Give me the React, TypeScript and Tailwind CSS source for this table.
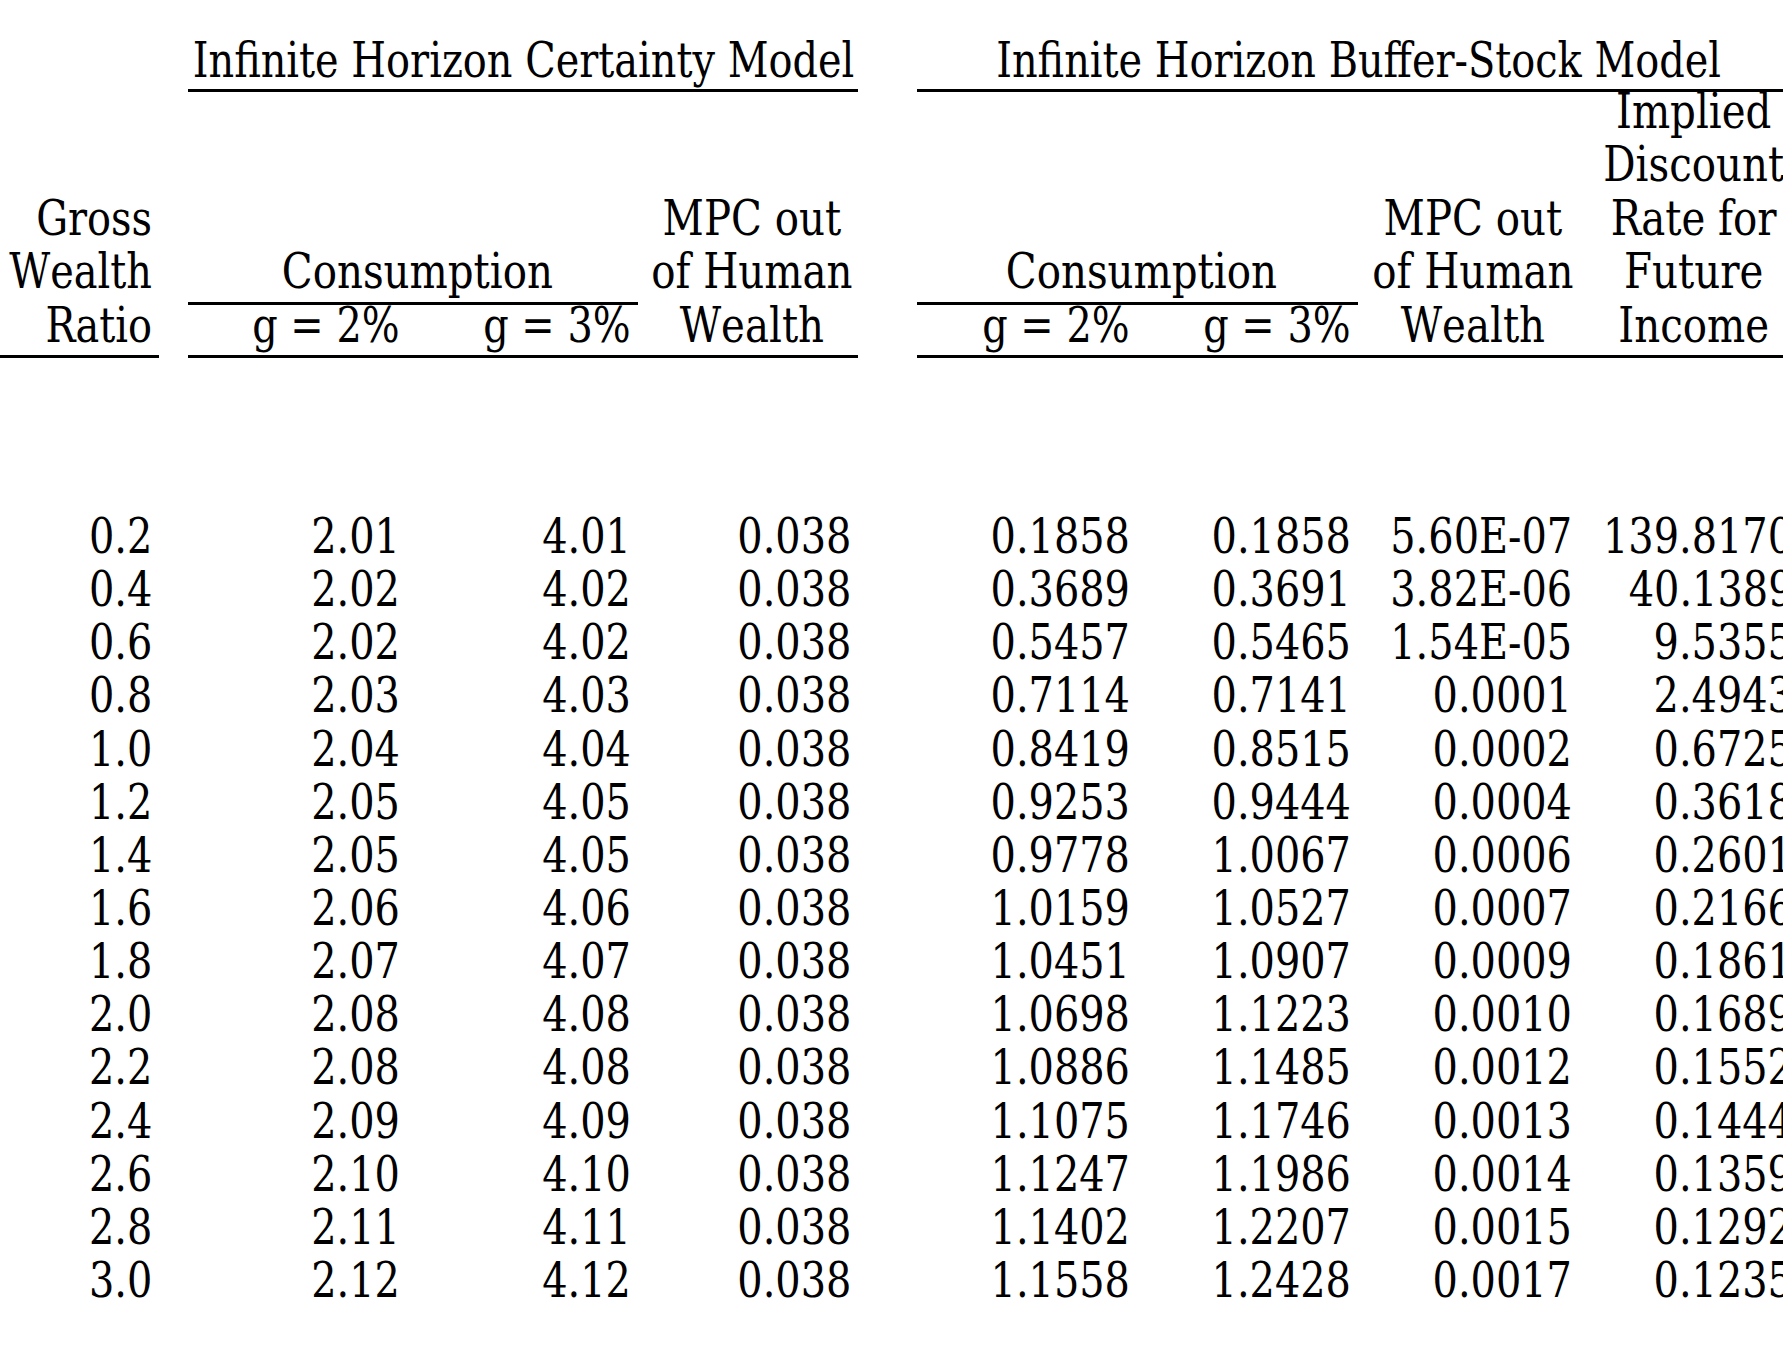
const GRID =
  "grid grid-cols-[159px_29px_219px_231px_220px_59px_220px_221px_221px_221px]";

const rows = [
  ["0.2", "2.01", "4.01", "0.038", "0.1858", "0.1858", "5.60E-07", "139.8170"],
  ["0.4", "2.02", "4.02", "0.038", "0.3689", "0.3691", "3.82E-06", "40.1389"],
  ["0.6", "2.02", "4.02", "0.038", "0.5457", "0.5465", "1.54E-05", "9.5355"],
  ["0.8", "2.03", "4.03", "0.038", "0.7114", "0.7141", "0.0001", "2.4943"],
  ["1.0", "2.04", "4.04", "0.038", "0.8419", "0.8515", "0.0002", "0.6725"],
  ["1.2", "2.05", "4.05", "0.038", "0.9253", "0.9444", "0.0004", "0.3618"],
  ["1.4", "2.05", "4.05", "0.038", "0.9778", "1.0067", "0.0006", "0.2601"],
  ["1.6", "2.06", "4.06", "0.038", "1.0159", "1.0527", "0.0007", "0.2166"],
  ["1.8", "2.07", "4.07", "0.038", "1.0451", "1.0907", "0.0009", "0.1861"],
  ["2.0", "2.08", "4.08", "0.038", "1.0698", "1.1223", "0.0010", "0.1689"],
  ["2.2", "2.08", "4.08", "0.038", "1.0886", "1.1485", "0.0012", "0.1552"],
  ["2.4", "2.09", "4.09", "0.038", "1.1075", "1.1746", "0.0013", "0.1444"],
  ["2.6", "2.10", "4.10", "0.038", "1.1247", "1.1986", "0.0014", "0.1359"],
  ["2.8", "2.11", "4.11", "0.038", "1.1402", "1.2207", "0.0015", "0.1292"],
  ["3.0", "2.12", "4.12", "0.038", "1.1558", "1.2428", "0.0017", "0.1235"],
];

// right aligned cell text, squeezed like the original condensed serif
const Right = ({ children }: { children: React.ReactNode }) => (
  <div className="flex justify-end pr-[7px]">
    <div className="shrink-0 origin-right scale-x-[0.83] text-right whitespace-nowrap">{children}</div>
  </div>
);

const Center = ({ children }: { children: React.ReactNode }) => (
  <div className="flex justify-center pl-[8px]">
    <div className="shrink-0 origin-center scale-x-[0.84] text-center whitespace-nowrap">{children}</div>
  </div>
);

const Title = ({ children }: { children: React.ReactNode }) => (
  <div className="flex justify-center">
    <div className="shrink-0 origin-center scale-x-[0.83] whitespace-nowrap">{children}</div>
  </div>
);

export default function App() {
  return (
    <div className="w-[1783px] h-[1352px] overflow-hidden bg-white text-black font-['DejaVu_Serif',serif] text-[48px] [font-kerning:none]">
      <div className="w-[1800px]">
        {/* Model titles */}
        <div className={`${GRID} pt-[34px] leading-[53.5px]`}>
          <div />
          <div />
          <div className="col-span-3 pb-[1.5px] border-b-[3px] border-black">
            <Title>Infinite Horizon Certainty Model</Title>
          </div>
          <div />
          <div className="col-span-4 pb-[1.5px] border-b-[3px] border-black">
            <Title>Infinite Horizon Buffer-Stock Model</Title>
          </div>
        </div>

        {/* Column headers */}
        <div className={`${GRID} -mt-[7.5px] leading-[53.5px] items-end`}>
          <div className="pb-[3px] border-b-[3px] border-black">
            <Right>
              Gross
              <br />
              Wealth
              <br />
              Ratio
            </Right>
          </div>
          <div />
          <div className="col-span-3 grid grid-cols-[219px_231px_220px] items-end border-b-[3px] border-black">
            <div className="col-span-2">
              <div className="pb-[4px] border-b-[3px] border-black">
                <Center>Consumption</Center>
              </div>
              <div className="grid grid-cols-[219px_231px] leading-[41px] pb-[9px]">
                <Right>g = 2%</Right>
                <Right>g = 3%</Right>
              </div>
            </div>
            <div className="pb-[3px]">
              <Center>
                MPC out
                <br />
                of Human
                <br />
                Wealth
              </Center>
            </div>
          </div>
          <div />
          <div className="col-span-4 grid grid-cols-[220px_221px_221px_221px] items-end border-b-[3px] border-black">
            <div className="col-span-2">
              <div className="pb-[4px] border-b-[3px] border-black">
                <Center>Consumption</Center>
              </div>
              <div className="grid grid-cols-[220px_221px] leading-[41px] pb-[9px]">
                <Right>g = 2%</Right>
                <Right>g = 3%</Right>
              </div>
            </div>
            <div className="pb-[3px]">
              <Center>
                MPC out
                <br />
                of Human
                <br />
                Wealth
              </Center>
            </div>
            <div className="pb-[3px]">
              <Center>
                Implied
                <br />
                Discount
                <br />
                Rate for
                <br />
                Future
                <br />
                Income
              </Center>
            </div>
          </div>
        </div>

        {/* Data */}
        <div className="mt-[152px] leading-[53.14px]">
          {rows.map((r) => (
            <div key={r[0]} className={GRID}>
              <Right>{r[0]}</Right>
              <div />
              <Right>{r[1]}</Right>
              <Right>{r[2]}</Right>
              <Right>{r[3]}</Right>
              <div />
              <Right>{r[4]}</Right>
              <Right>{r[5]}</Right>
              <Right>{r[6]}</Right>
              <Right>{r[7]}</Right>
            </div>
          ))}
        </div>
      </div>
    </div>
  );
}
